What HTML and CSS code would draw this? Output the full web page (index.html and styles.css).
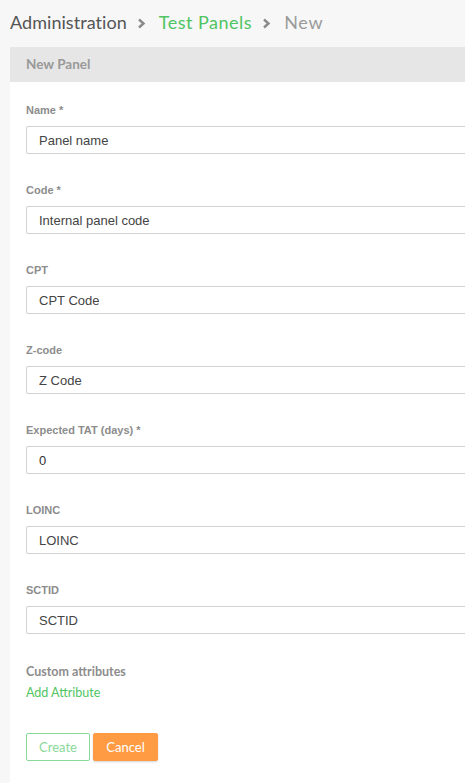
FILE: index.html
```html
<!DOCTYPE html>
<html>
<head>
<meta charset="utf-8">
<link rel="stylesheet" href="styles.css">
</head>
<body>
<nav class="crumbs">
  <span class="crumb root">Administration</span>
  <svg class="chev" width="9" height="11" viewBox="0 0 9 11"><path d="M2 1.5 L6.5 5.5 L2 9.5" fill="none" stroke="#8a8a8a" stroke-width="2.4"/></svg>
  <span class="crumb link">Test Panels</span>
  <svg class="chev" width="9" height="11" viewBox="0 0 9 11"><path d="M2 1.5 L6.5 5.5 L2 9.5" fill="none" stroke="#8a8a8a" stroke-width="2.4"/></svg>
  <span class="crumb current">New</span>
</nav>
<section class="panel">
  <header class="panel-head">New Panel</header>
  <div class="panel-body">
    <div class="group"><label class="lbl">Name *</label><input class="inp" placeholder="Panel name"></div>
    <div class="group"><label class="lbl">Code *</label><input class="inp" placeholder="Internal panel code"></div>
    <div class="group"><label class="lbl">CPT</label><input class="inp" placeholder="CPT Code"></div>
    <div class="group"><label class="lbl">Z-code</label><input class="inp" placeholder="Z Code"></div>
    <div class="group"><label class="lbl">Expected TAT (days) *</label><input class="inp val" value="0"></div>
    <div class="group"><label class="lbl">LOINC</label><input class="inp" placeholder="LOINC"></div>
    <div class="group"><label class="lbl">SCTID</label><input class="inp" placeholder="SCTID"></div>
    <div class="custom">
      <div class="lbl">Custom attributes</div>
      <a class="add">Add Attribute</a>
    </div>
    <div class="actions">
      <button class="btn create">Create</button>
      <button class="btn cancel">Cancel</button>
    </div>
  </div>
</section>
</body>
</html>
```
FILE: styles.css
```css
html, body {
  margin: 0;
  padding: 0;
  background: #f7f7f7;
  overflow: hidden;
  height: 783px;
}
body {
  font-family: Lato, "Open Sans", sans-serif;
  padding: 0 0 0 10px;
  box-sizing: border-box;
}
.crumbs {
  height: 47px;
  display: flex;
  align-items: center;
  padding-bottom: 3px;
  box-sizing: border-box;
  white-space: nowrap;
}
.crumb {
  font-size: 18px;
}
.root { color: #555; letter-spacing: 0.05px; }
.link { color: #4fc462; letter-spacing: 0.5px; }
.current { color: #9a9a9a; letter-spacing: 0.7px; }
.chev { margin: 2px 13px 0 10px; }
.panel {
  width: 455px;
  height: 736px;
  background: #fff;
  overflow: hidden;
}
.panel-head {
  height: 35px;
  background: #e6e6e6;
  color: #999;
  font-weight: 700;
  font-size: 13.5px;
  line-height: 35px;
  padding-left: 16px;
}
.panel-body {
  padding: 20px 0 0 16px;
}
.group {
  display: flex;
  flex-direction: column;
  margin-bottom: 28px;
}
.lbl {
  font-family: "Liberation Sans", Arial, sans-serif;
  font-size: 11px;
  font-weight: 700;
  color: #8c8c8c;
  line-height: 16px;
  margin-bottom: 8px;
}
.inp {
  width: 442px;
  height: 28px;
  box-sizing: border-box;
  border: 1px solid #d2d2d2;
  border-radius: 2px;
  padding: 0 12px;
  font-family: "Liberation Sans", Arial, sans-serif;
  font-size: 13px;
  color: #333;
  background: #fff;
  outline: none;
}
.inp::placeholder { color: #444; opacity: 1; }
.custom {
  display: flex;
  flex-direction: column;
}
.custom .lbl {
  font-family: Lato, "Open Sans", sans-serif;
  font-size: 12.5px;
  line-height: 17px;
  margin-top: 1px;
  margin-bottom: 4px;
}
.add {
  font-size: 12.5px;
  color: #4fc462;
  line-height: 17px;
}
.actions {
  margin-top: 32px;
  display: flex;
  gap: 3px;
}
.btn {
  height: 28px;
  font-family: Lato, "Open Sans", sans-serif;
  font-size: 13px;
  border-radius: 2px;
  padding: 0;
  cursor: pointer;
}
.create {
  width: 64px;
  background: #fff;
  border: 1px solid #8ad99a;
  color: #8ad99a;
}
.cancel {
  width: 65px;
  background: #ff9b43;
  border: 1px solid #ff9b43;
  color: #fff;
  box-shadow: 0 1px 2px rgba(0,0,0,0.18);
}
```
